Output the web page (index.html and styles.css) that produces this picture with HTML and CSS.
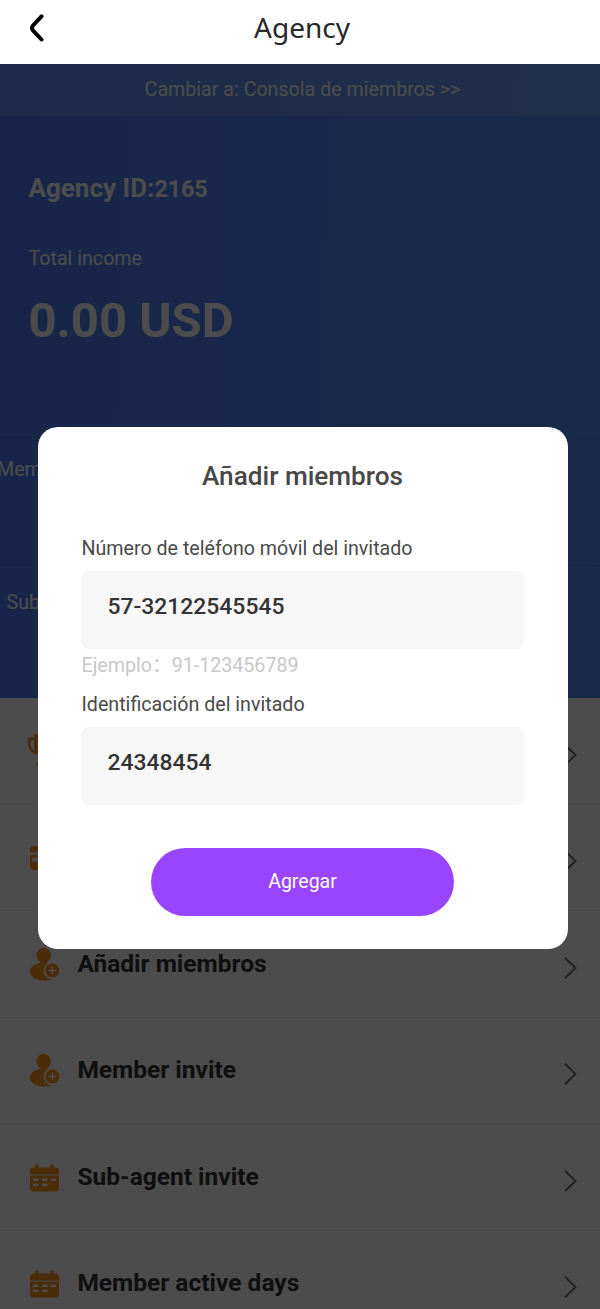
FILE: index.html
```
<!DOCTYPE html>
<html lang="es">
<head>
<meta charset="utf-8">
<title>Agency</title>
<link rel="stylesheet" href="styles.css">
</head>
<body>
<svg class="defs" aria-hidden="true">
  <mask id="badge-gap" maskUnits="userSpaceOnUse" x="0" y="0" width="30" height="34">
    <rect width="30" height="34" fill="#fff"/>
    <circle cx="22.300" cy="23.500" r="8.700" fill="#000"/>
  </mask>
  <symbol id="user" viewBox="0 0 30 34">
    <g mask="url(#badge-gap)">
      <ellipse cx="13.700" cy="8.200" rx="7.300" ry="7.500"/>
      <path d="M10.500 14h6.400l1 2.500h-8.400z"/>
      <ellipse cx="14" cy="24.500" rx="14" ry="9.200"/>
    </g>
    <path fill-rule="evenodd" d="M22.300 16.500a7 7 0 1 1 0 14 7 7 0 0 1 0-14zm-.7 2.900v3.400h-3.400v1.400h3.400v3.400h1.400v-3.400h3.400v-1.400h-3.400v-3.400z"/>
  </symbol>
  <symbol id="calendar" viewBox="0 0 29 28">
    <path d="M0 10.600V7q0-3.500 3.500-3.500H5V2.200a1.900 1.900 0 0 1 3.800 0v1.300h11.400V2.200a1.900 1.900 0 0 1 3.800 0v1.300h1.500Q29 3.500 29 7v3.600z"/>
    <path fill-rule="evenodd" d="M0 11.400h29V24q0 3.500-3.500 3.500h-22Q0 27.500 0 24zM3 14.400v2.500h5.500v-2.500zm9 0v2.500h5.500v-2.500zm8.700 0v2.500h5.500v-2.500zM3 19.700v2.400h5.500v-2.400zm9 0v2.400h5.500v-2.400z"/>
  </symbol>
  <symbol id="wallet" viewBox="0 0 29 24">
    <path d="M0 6.300V4q0-4 4-4h21q4 0 4 4v2.300z"/>
    <path fill-rule="evenodd" d="M0 9h29v11q0 4-4 4H4q-4 0-4-4zm2.300 2.500v4.300h24.400v-4.300z"/>
  </symbol>
  <symbol id="trophy" viewBox="0 0 34 34">
    <path d="M6 0h22v13c0 5-4 9-8 10v4h-6v-4c-4-1-8-5-8-10zM8.500 29h17v3h-17z"/>
    <path class="handle" d="M6 4.700H1.400v6c0 4 2.600 6.500 6.600 8.800M28 4.700h4.600v6c0 4-2.600 6.500-6.600 8.800"/>
  </symbol>
  <symbol id="chevron" viewBox="0 0 13 22"><path d="M1 .8l10.500 10.200L1 21.200"/></symbol>
</svg>

<header class="header">
  <svg class="back" viewBox="0 0 16 28"><path d="M12.500 2.300L4 11.500q-2 2.500 0 5l8.500 9"/></svg>
  <h1 class="title">Agency</h1>
</header>

<main class="page">
  <section class="account">
    <div class="switch">Cambiar a: Consola de miembros &gt;&gt;</div>
    <div class="summary">
      <div class="agency">Agency ID:<span class="agency-id">2165</span></div>
      <div class="income-label">Total income</div>
      <div class="income">0.00 USD</div>
    </div>
    <div class="stat">Mem</div>
    <div class="stat stat-sub">Sub</div>
  </section>
  <nav class="menu">
    <div class="row"><svg class="icon icon-trophy"><use href="#trophy"/></svg><span class="name"></span><svg class="chevron"><use href="#chevron"/></svg></div>
    <div class="row"><svg class="icon icon-wallet"><use href="#wallet"/></svg><span class="name"></span><svg class="chevron"><use href="#chevron"/></svg></div>
    <div class="row"><svg class="icon icon-user"><use href="#user"/></svg><span class="name">Añadir miembros</span><svg class="chevron"><use href="#chevron"/></svg></div>
    <div class="row"><svg class="icon icon-user"><use href="#user"/></svg><span class="name">Member invite</span><svg class="chevron"><use href="#chevron"/></svg></div>
    <div class="row"><svg class="icon icon-calendar"><use href="#calendar"/></svg><span class="name">Sub-agent invite</span><svg class="chevron"><use href="#chevron"/></svg></div>
    <div class="row"><svg class="icon icon-calendar"><use href="#calendar"/></svg><span class="name">Member active days</span><svg class="chevron"><use href="#chevron"/></svg></div>
  </nav>
</main>

<div class="overlay">
  <div class="dialog">
    <h2 class="dialog-title">Añadir miembros</h2>
    <div class="label">Número de teléfono móvil del invitado</div>
    <div class="field">57-32122545545</div>
    <div class="hint">Ejemplo：91-123456789</div>
    <div class="label">Identificación del invitado</div>
    <div class="field">24348454</div>
    <button class="submit">Agregar</button>
  </div>
</div>
</body>
</html>
```
FILE: styles.css
```
* { box-sizing: border-box; }
body {
  margin: 0;
  height: 1309px;
  overflow: hidden;
  background: #fff;
  font-family: Roboto, "Noto Sans CJK SC", sans-serif;
}
.defs { position: absolute; width: 0; height: 0; }

.header {
  display: grid;
  grid-template-columns: 56px 1fr 56px;
  align-items: center;
  height: 64px;
  padding-bottom: 8px;
}
.back {
  width: 16px;
  height: 28px;
  margin-left: 29px;
  fill: none;
  stroke: #000;
  stroke-width: 4;
  stroke-linecap: round;
}
.title {
  margin: 0 0 2px;
  padding-left: 4px;
  text-align: center;
  font: 400 28px/40px "Noto Sans", sans-serif;
  color: #282828;
}

.page { height: 1245px; overflow: hidden; }
.account {
  height: 634px;
  color: #fff;
  background: linear-gradient(92deg, #507df9, #5092f7);
}
.switch {
  height: 52px;
  padding-left: 5px;
  background: rgba(255, 255, 255, .13);
  text-align: center;
  font-size: 19.650px;
  line-height: 51px;
}
.summary { height: 318px; padding: 54px 28.500px 0; }
.agency { font-size: 26px; font-weight: 700; line-height: 36px; }
.agency-id { font-size: 23.200px; }
.income-label { margin-top: 39px; font-size: 19.650px; line-height: 26px; }
.income { margin-top: 18px; font-size: 49px; font-weight: 700; line-height: 62px; }
.stat {
  height: 133px;
  padding-top: 22px;
  border-top: 1px solid rgba(255, 255, 255, .1);
  font-size: 19.650px;
  line-height: 26px;
  text-indent: -3px;
}
.stat-sub { height: 131px; text-indent: 6.500px; }

.row {
  display: flex;
  align-items: center;
  height: 106.500px;
  padding: 0 23px 0 29px;
  border-bottom: 1px solid #f2f2f2;
}
.icon { flex: none; fill: #ff9620; }
.icon-user { width: 30px; height: 34px; margin: 0 0 0 1px; }
.icon-calendar { width: 29px; height: 28px; margin: 2px 1px 0; }
.icon-wallet { width: 29px; height: 24px; margin: 2px 1px 0; }
.icon-trophy { width: 34px; height: 34px; margin: 0 0 0 -1px; }
.handle { fill: none; stroke: #ff9620; stroke-width: 2.500; }
.name {
  flex: 1;
  margin-left: 17.400px;
  font-size: 24.500px;
  font-weight: 700;
  line-height: 32px;
  color: #333;
}
.chevron {
  width: 13px;
  height: 22px;
  margin-top: 8px;
  fill: none;
  stroke: #707070;
  stroke-width: 1.900;
}

.overlay {
  position: absolute;
  inset: 64px 0 0;
  padding: 363px 32.500px 0 37.500px;
  background: rgba(0, 0, 0, .7);
}
.dialog {
  display: flex;
  flex-direction: column;
  height: 522px;
  padding: 32px 43.500px 0;
  border-radius: 20px;
  background: #fff;
}
.dialog-title {
  margin: 0 0 44px;
  text-align: center;
  font-size: 26.150px;
  font-weight: 500;
  line-height: 34px;
  color: #484848;
}
.label {
  height: 34px;
  padding-left: .5px;
  font-size: 19.650px;
  line-height: 24px;
  color: #4a4a4a;
}
.field {
  height: 78px;
  padding: 19px 26.500px 0;
  border-radius: 8px;
  background: #f7f7f7;
  font-size: 22.900px;
  font-weight: 500;
  line-height: 34px;
  color: #333;
}
.hint {
  height: 44px;
  padding-left: .5px;
  font-size: 19.650px;
  line-height: 33px;
  color: #c8c8c8;
}
.submit {
  width: 303px;
  height: 68px;
  margin: 43px auto 0;
  padding: 0;
  border: 0;
  border-radius: 34px;
  background: #9945ff;
  color: #fff;
  font: 400 19.500px/66px Roboto, sans-serif;
}
```
